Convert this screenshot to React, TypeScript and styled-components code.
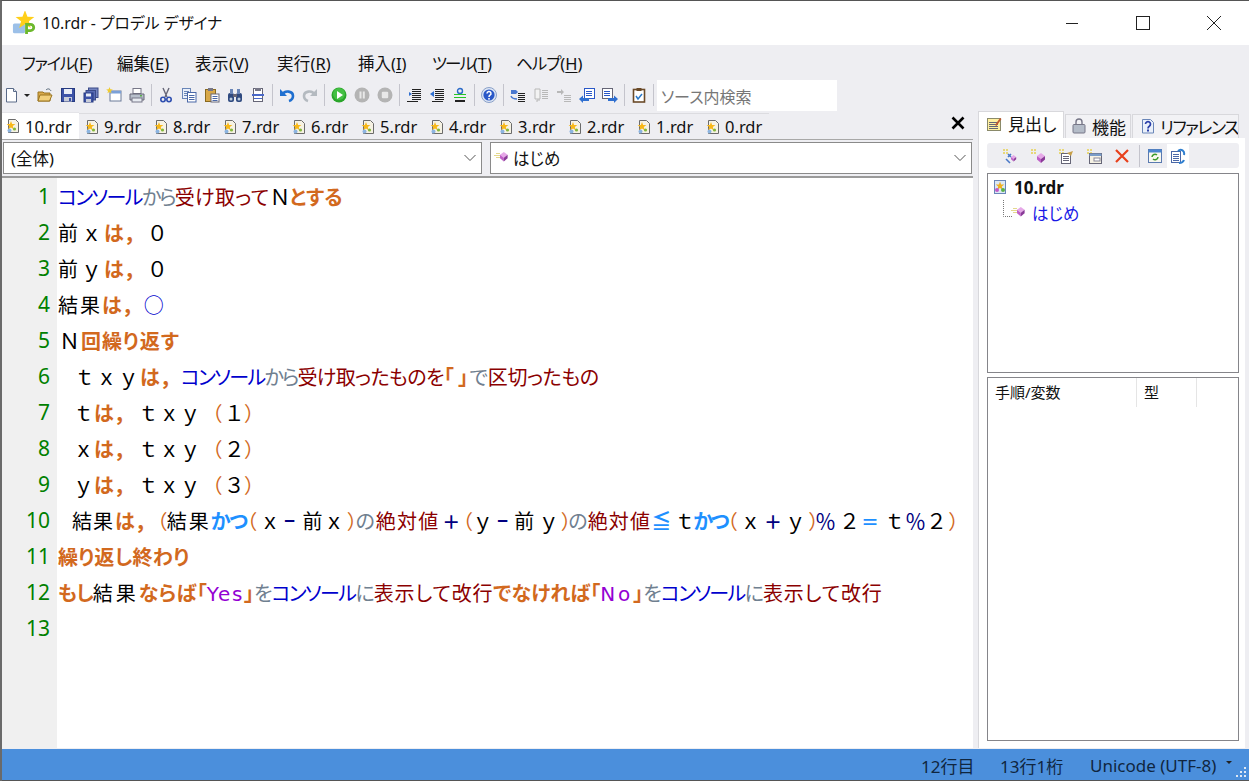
import React from "react";
import styled, { createGlobalStyle } from "styled-components";

const Global = createGlobalStyle`
  html, body { margin: 0; padding: 0; height: 100%; overflow: hidden; background: #eeeef2; }
  * { box-sizing: border-box; }
  body { font-family: "Noto Sans", "Noto Sans CJK JP", sans-serif; font-feature-settings: "palt"; color: #111; }
`;

const Windowed = styled.div`
  width: 1249px; height: 781px; display: flex; flex-direction: column;
  border-top: 1px solid #555; border-left: 2px solid #6a6a6a; background: #eeeef2; overflow: hidden;
`;
const TitleBar = styled.div`
  height: 44px; background: #fff; display: flex; align-items: center; padding-left: 10px; flex: none;
`;
const TitleText = styled.div`font-size: 15.8px; margin-left: 5px; margin-top: -2px; flex: 1;`;
const WinButton = styled.div`
  width: 71px; height: 44px; display: flex; align-items: center; justify-content: center;
`;
const WinGroup = styled.div`display: flex;`;
const MenuBar = styled.div`
  height: 33px; display: flex; align-items: center; padding: 3px 0 0 20px; font-size: 16.5px; flex: none;
  & u { text-underline-offset: 2px; }
`;
const MenuItem = styled.div`width: ${p => p.$w}px; flex: none;`;
const MenuLabel = styled.span`letter-spacing: ${p => p.$ls}px;`;
const Toolbar = styled.div`
  height: 32px; display: flex; align-items: center; padding: 2px 0 0 0; flex: none;
`;
const ToolBtn = styled.div`
  width: ${p => p.$w || 23}px; height: 24px; display: flex; align-items: center; justify-content: center; flex: none;
  background: ${p => p.$hot ? "#fff" : "transparent"};
`;
const ToolSep = styled.div`width: 1px; height: 22px; background: #c4c4cc; margin: 0 2px 0 3px; flex: none;`;
const Search = styled.div`
  width: 180px; height: 31px; background: #fff; color: #777; font-size: 16px; padding: 4px 0 0 4px; margin-left: 1px;
`;
const Main = styled.div`flex: 1; display: flex; min-height: 0;`;
const Left = styled.div`width: 971px; flex: none; display: flex; flex-direction: column;`;
const TabRow = styled.div`height: 29px; display: flex; align-items: flex-end; flex: none;`;
const Tab = styled.div`
  display: flex; align-items: center; height: ${p => p.$active ? 27 : 26}px; font-size: 16.5px;
  width: ${p => p.$active ? 77 : 69}px; flex: none; padding-left: ${p => p.$active ? 3 : 5}px; gap: 4px;
  background: ${p => p.$active ? "#fff" : "transparent"};
  border-top: 1px solid ${p => p.$active ? "#e4e4e8" : "#dcdce0"};
`;
const TabClose = styled.div`margin-left: auto; margin-right: 7px; width: 16px; height: 26px; display: flex; align-items: center; justify-content: center; align-self: flex-start;`;
const ComboRow = styled.div`display: flex; gap: 8px; height: 37px; padding: 2px 0 2px 1px; flex: none; border-top: 1px solid #a8a8a8;`;
const Combo = styled.div`
  width: ${p => p.$w}px; height: 32px; background: #fff; border: 1px solid #8a8a8a; display: flex; align-items: center;
  font-size: 16.5px; padding: 0 4px 1px ${p => p.$pad}px; gap: 3px; flex: none;
  & > span { flex: 1; }
`;
const Editor = styled.div`
  flex: 1; display: flex; background: #fff; border-top: 2px solid #9a9a9a; min-height: 0;
`;
const Gutter = styled.div`
  width: 55px; flex: none; background: #f0f0f0; padding: 1px 7px 0 0; text-align: right;
`;
const Num = styled.div`height: 35.98px; line-height: 35.98px; font-size: 21px; color: #008000; font-family: "Noto Sans", sans-serif;`;
const Code = styled.div`flex: 1; padding: 1px 0 0 1px;`;
const Line = styled.div`
  height: 35.98px; line-height: 35.98px; font-size: 20px; white-space: pre; padding-left: ${p => p.$indent || 0}px;
  font-family: "Noto Sans CJK JP", sans-serif;
`;
const colors = { k: "#0000cd", p: "#708090", v: "#8b0000", b: "#000", o: "#d2691e", s: "#9400d3", c: "#1e90ff", n: "#000080", m: "#000080", d: "#000080", e: "#1e90ff", r: "#d2691e" };
const spacing = { k: -1.55, p: -1, s: 1.5 };
const symbolSize = { m: 18, e: 18 };
const Tok = styled.span`
  color: ${p => colors[p.$k]};
  font-weight: ${p => ["o", "c", "m", "d", "e"].includes(p.$k) ? 700 : 400};
  letter-spacing: ${p => p.$ls ?? spacing[p.$k] ?? 0}px;
  margin-left: ${p => p.$ml || 0}px;
  ${p => symbolSize[p.$k] ? `font-size: ${symbolSize[p.$k]}px; font-feature-settings: normal;` : ""}
  ${p => p.$k === "s" ? `font-family: "DejaVu Sans", sans-serif; font-size: 20px;` : ""}
  ${p => p.$k === "d" ? `display: inline-block; width: 13px; font-feature-settings: normal; transform: scaleX(.66); transform-origin: 0 50%;` : ""}
`;
const Fw = styled.span`font-size: 21px; font-feature-settings: normal;`;
const Right = styled.div`flex: 1; display: flex; flex-direction: column; padding: 0 4px 0 5px; min-width: 0;`;
const PanelTabs = styled.div`height: 28px; display: flex; align-items: flex-end; flex: none;`;
const PanelTab = styled.div`
  width: ${p => p.$w}px; height: ${p => p.$active ? 27 : 24}px; flex: none; display: flex; align-items: center; gap: ${p => p.$gap}px;
  padding: 0 0 ${p => p.$active ? 3 : 1}px ${p => p.$pad}px; font-size: 17px; letter-spacing: ${p => p.$ls || 0}px; background: ${p => p.$active ? "#fff" : "#f2f2f5"};
  border: 1px solid #d8d8dc; border-bottom: none; margin-right: 1px; white-space: nowrap; overflow: hidden;
`;
const Panel = styled.div`
  flex: 1; background: #fff; padding: 5px 6px 7px 8px; display: flex; flex-direction: column; min-height: 0; border-left: 1px solid #d8d8dc;
`;
const PanelTools = styled.div`
  height: 25px; background: #eeeef2; border-radius: 3px; display: flex; align-items: center; padding-left: 9px; flex: none; margin-bottom: 5px;
`;
const Tree = styled.div`
  height: 200px; flex: none; border: 1px solid #85858a; padding: 0 0 0 4px; margin-bottom: 4px; font-size: 16.5px;
`;
const TreeRow = styled.div`display: flex; align-items: center; height: 26px; gap: ${p => p.$bold ? 6 : 4}px; padding-left: ${p => p.$in || 0}px;
  font-weight: ${p => p.$bold ? 700 : 400}; font-size: ${p => p.$bold ? 17 : 16.5}px; color: ${p => p.$blue ? "#1a1ae6" : "#111"};`;
const TreeGem = styled.span`margin: 0 1px 0 -5px; display: block;`;
const ListBox = styled.div`flex: 1; border: 1px solid #85858a; font-size: 15px;`;
const ListHead = styled.div`display: flex; height: 31px;`;
const ListCol = styled.div`width: ${p => p.$w}px; flex: none; padding: 3px 0 0 7px; height: 29px; border-right: 1px solid #e5e5e5;`;
const Status = styled.div`
  height: 33px; flex: none; background: #4b8fdc; color: #10263f; display: flex; align-items: center; justify-content: flex-end; font-size: 17px;
  border-bottom: 1px solid #555; border-top: 1px solid #eeeef2; margin-left: -2px;
`;
const StatusItem = styled.div`width: ${p => p.$w}px; flex: none; padding-top: 2px;`;
const StatusCaret = styled.svg`display: block; flex: none; margin: 0 4px 4px 8px;`;
const Grip = styled.svg`display: block; flex: none; align-self: flex-end; margin: 0 2px 2px 0;`;

/* ---- icons ---- */
const S = ({ children, w = 16, h = 16 }: any) => <svg width={w} height={h} viewBox="0 0 16 16" style={{ display: "block" }}>{children}</svg>;
const star = (x: number, y: number, r: number, f = "#ffd21f") => {
  const pts = [];
  for (let i = 0; i < 10; i++) {
    const a = -Math.PI / 2 + i * Math.PI / 5; const q = i % 2 ? r * 0.42 : r;
    pts.push(`${(x + q * Math.cos(a)).toFixed(1)},${(y + q * Math.sin(a)).toFixed(1)}`);
  }
  return <polygon points={pts.join(" ")} fill={f} />;
};
const gem = (x: number, y: number, s = 1) => <g transform={`translate(${x} ${y}) scale(${s})`}><polygon points="4,0 8,3 4,6 0,3" fill="#e6a8e8" /><polygon points="0,3 4,6 4,10 0,6.5" fill="#c060c8" /><polygon points="8,3 4,6 4,10 8,6.5" fill="#8a3a98" /></g>;
const sparks = (x: number, y: number) => <g fill="#e8d878"><rect x={x} y={y} width="2" height="2" /><rect x={x + 3} y={y} width="2" height="2" /><rect x={x} y={y + 3} width="2" height="2" /><rect x={x + 3} y={y + 3} width="2" height="2" /></g>;
const speed = (x: number, y: number) => <g fill="#e4d88c"><rect x={x + 2} y={y} width="4" height="1" /><rect x={x} y={y + 2} width="6" height="1" /><rect x={x + 2} y={y + 4} width="4" height="1" /></g>;
const lines = (x: number, y: number, n: number, w: number, c = "#222") => <g fill={c}>{Array.from({ length: n }, (_, i) => <rect key={i} x={x} y={y + i * 2} width={w} height="1" />)}</g>;

const Icons: Record<string, React.ReactNode> = {
  app: <S w={25} h={25}><rect x=".6" y="8" width="7.700" height="6.300" rx="1" fill="#9cc0e8" />{star(8.3, 5.8, 6.3, "#ffcf1a")}<path d="M9.300 14.700V8.500h2.600a2 2 0 0 1 0 4H9.300" fill="none" stroke="#6cb82c" strokeWidth="1.800" /></S>,
  tabdoc: <S><path d="M3.500 1.500h7l3 3v10h-10z" fill="#f6f2e4" stroke="#6b6b6b" />{star(6, 7.5, 4.6, "#f8b818")}<circle cx="4.500" cy="12.500" r="2" fill="#8cb4e0" /><circle cx="9.500" cy="11" r="1.600" fill="#84b83c" /></S>,
  newdoc: <S><path d="M3.500 1.500h7l3 3v10.500h-10z" fill="#fff" stroke="#5a6a88" /><path d="M10.500 1.500v3h3" fill="#dfe6f2" stroke="#5a6a88" /></S>,
  arrow: <svg width="6" height="3" viewBox="0 0 6 3"><path d="M0 0h6L3 3z" fill="#222" /></svg>,
  open: <S><path d="M1 5h5l1 1h6v8H1z" fill="#d9a94a" stroke="#9a7420" /><path d="M3 8h12l-2.500 6H1z" fill="#f2cf7a" stroke="#9a7420" /><path d="M9 3c2-2 4-1 5 1" stroke="#567" fill="none" /></S>,
  save: <S><rect x="1.500" y="1.500" width="13" height="13" fill="#3c52a8" stroke="#263a80" /><rect x="4" y="2" width="8" height="5" fill="#e8ecf6" /><rect x="4" y="10" width="8" height="4.500" fill="#c8ccd8" /><rect x="9" y="11" width="2" height="3" fill="#3c52a8" /></S>,
  saveall: <S><rect x="5.500" y="1" width="9.500" height="9.500" fill="#7484c0" stroke="#3a4a88" /><rect x="3" y="3.500" width="9.500" height="9.500" fill="#5a6cb4" stroke="#3a4a88" /><rect x="1" y="6" width="9" height="9" fill="#3c52a8" stroke="#263a80" /><rect x="3" y="6.500" width="5" height="3" fill="#e8ecf6" /><rect x="3" y="12" width="5" height="3" fill="#c8ccd8" /></S>,
  newwin: <S><rect x="4" y="4" width="11" height="10" fill="#fff" stroke="#6a7a98" /><rect x="4" y="4" width="11" height="2.500" fill="#7aa0d8" />{star(3.5, 3.5, 3.5, "#f0cc30")}</S>,
  print: <S><rect x="4" y="1.500" width="8" height="5" fill="#fff" stroke="#778" /><path d="M1 7h14v6H1z" fill="#b8c0cc" stroke="#667" /><rect x="3" y="11" width="10" height="4" fill="#e8ecf2" stroke="#778" /><rect x="11" y="8" width="2" height="1.500" fill="#5ab04a" /></S>,
  cut: <S><path d="M5 1l4 9M11 1L7 10" stroke="#667" strokeWidth="1.400" fill="none" /><circle cx="5" cy="12.500" r="2.200" fill="none" stroke="#2f4fb0" strokeWidth="1.600" /><circle cx="11" cy="12.500" r="2.200" fill="none" stroke="#2f4fb0" strokeWidth="1.600" /></S>,
  copy: <S><rect x="1.500" y="1.500" width="8" height="10" fill="#eaf0fa" stroke="#6a86b8" />{lines(3, 4, 3, 5, "#6a86b8")}<rect x="6.500" y="5.500" width="8.500" height="9.500" fill="#fff" stroke="#4a68a8" />{lines(8, 8, 3, 5.5, "#4a68a8")}</S>,
  paste: <S><rect x="1.500" y="2.500" width="10" height="12" fill="#d8a848" stroke="#8a6a20" /><rect x="4" y="1" width="5" height="3" fill="#778" /><rect x="7" y="7" width="8" height="8" fill="#fff" stroke="#667" />{lines(8.5, 9, 3, 5, "#4a68a8")}</S>,
  find: <S><rect x="1" y="6" width="6" height="9" rx="2" fill="#2f4a80" /><rect x="9" y="6" width="6" height="9" rx="2" fill="#2f4a80" /><rect x="6" y="7" width="4" height="3" fill="#667" /><rect x="3" y="2" width="3" height="5" fill="#6a86b8" /><rect x="10" y="2" width="3" height="5" fill="#6a86b8" /><circle cx="4" cy="12" r="1.500" fill="#bcd" /><circle cx="12" cy="12" r="1.500" fill="#bcd" /></S>,
  list: <S><rect x="3.500" y="1.500" width="9" height="13" fill="#fff" stroke="#667" /><rect x="5" y="1" width="6" height="3" fill="#778" /><rect x="2" y="7" width="12" height="2" fill="#4a68c8" /><rect x="4" y="11" width="8" height="1" fill="#4a68c8" /></S>,
  undo: <S><path d="M4 7c2-4 10-3 10 2 0 2-1 4-4 5" stroke="#1f6fd0" strokeWidth="2.600" fill="none" /><path d="M1 2l0 7 7 0z" fill="#1f6fd0" /></S>,
  redo: <S><path d="M12 7c-2-4-10-3-10 2 0 2 1 4 4 5" stroke="#b4bac0" strokeWidth="2.600" fill="none" /><path d="M15 2l0 7-7 0z" fill="#b4bac0" /></S>,
  play: <S><circle cx="8" cy="8" r="7.500" fill="#2aa52a" /><circle cx="8" cy="7" r="6" fill="#44c044" /><path d="M6 4l6 4-6 4z" fill="#fff" /></S>,
  pause: <S><circle cx="8" cy="8" r="7.500" fill="#b4b4b4" /><rect x="5.500" y="4.500" width="2" height="7" fill="#e8e8e8" /><rect x="8.800" y="4.500" width="2" height="7" fill="#e8e8e8" /></S>,
  stop: <S><circle cx="8" cy="8" r="7.500" fill="#b4b4b4" /><rect x="4.800" y="4.800" width="6.400" height="6.400" rx="1" fill="#e8e8e8" /></S>,
  indent: <S>{lines(6, 2, 6, 9)}<path d="M1 7l4-3v6z" fill="#2f6fd0" /><rect x="3" y="14" width="11" height="1" fill="#222" /></S>,
  outdent: <S>{lines(6, 2, 6, 9)}<path d="M0 7h3V5l3 2-3 2V7" fill="#2f6fd0" /><rect x="1" y="14" width="11" height="1" fill="#222" /></S>,
  comment: <S><circle cx="8" cy="4" r="2.500" fill="none" stroke="#2a6ac8" strokeWidth="1.400" /><rect x="2" y="7" width="12" height="1" fill="#26c426" /><rect x="2" y="10" width="12" height="1" fill="#26c426" /><rect x="3" y="13" width="10" height="2" fill="#222" /></S>,
  help: <S><circle cx="8" cy="8" r="7.500" fill="#dde6f4" stroke="#8aa0c8" /><circle cx="8" cy="8" r="5.600" fill="#2a58c8" /><path d="M6 6.500a2 2 0 1 1 3 1.700c-.8.500-1 .8-1 1.800" fill="none" stroke="#fff" strokeWidth="1.500" /><rect x="7.200" y="11" width="1.600" height="1.600" fill="#fff" /></S>,
  b1: <S><path d="M1 3h5l2 2-2 2H1" fill="#4a78d0" />{lines(8, 6, 5, 7)}<path d="M1 9c1 3 4 3 6 3" stroke="#4a78d0" strokeWidth="1.400" fill="none" /></S>,
  b2: <S><path d="M2 2h5v10H2z" fill="#f2f2f2" stroke="#b8b8b8" />{lines(9, 3, 5, 6, "#b8b8b8")}<path d="M4 15v-2h3" stroke="#b8b8b8" fill="none" /></S>,
  b3: <S><path d="M1 4h4V2l3 3-3 3V6H1z" fill="#b8b8b8" />{lines(8, 8, 4, 7, "#b8b8b8")}</S>,
  b4: <S><rect x="5.500" y="1.500" width="10" height="10" fill="#fff" stroke="#2a58c8" />{lines(7, 4, 3, 6, "#2a58c8")}<path d="M0 12l4-3.500V11h6v3H4v2z" fill="#2f6fd0" /></S>,
  b5: <S><rect x=".500" y="1.500" width="10" height="10" fill="#fff" stroke="#667" />{lines(2, 4, 3, 6, "#2a58c8")}<path d="M16 12l-4-3.500V11H6v3h6v2z" fill="#2f6fd0" /></S>,
  clip: <S><rect x="2.500" y="2.500" width="11" height="12.500" fill="#fff" stroke="#6b4a28" strokeWidth="1.600" /><rect x="5.500" y="1" width="5" height="3" fill="#6b4a28" /><path d="M5 9l2 3 4-5" stroke="#2a78c8" strokeWidth="1.500" fill="none" /></S>,
  gemsmall: <S>{speed(0, 3)}{gem(6, 2, .95)}</S>,
  tvars: <S>{sparks(1, 1)}<path d="M6 6l3 3M9 6l-3 3" stroke="#4a78c8" strokeWidth="1.600" />{gem(9, 7, .65)}<path d="M4 11l4 4" stroke="#4a78c8" strokeWidth="1.600" /></S>,
  tgem: <S>{sparks(1, 1)}{gem(7, 5, 1)}</S>,
  tprop: <S>{sparks(1, 1)}<rect x="3.500" y="5.500" width="9" height="10" fill="#fff" stroke="#667" />{lines(5, 8, 3, 6, "#667")}<path d="M9 5l6-2-2 5z" fill="#c8a048" /></S>,
  tclass: <S>{sparks(1, 1)}<rect x="3.500" y="5.500" width="12" height="10" fill="#f6f2e4" stroke="#667" /><rect x="3.500" y="5.500" width="12" height="2.500" fill="#7a9cc8" /><rect x="8" y="10" width="6" height="3" fill="#fff" stroke="#889" /></S>,
  del: <S><path d="M2 2l12 12M14 2L2 14" stroke="#e8401c" strokeWidth="2.200" /></S>,
  refresh: <S><rect x="1.500" y="1.500" width="13" height="13" fill="#f8f8f0" stroke="#5a7ab0" /><rect x="1.500" y="1.500" width="13" height="3" fill="#4a86d0" /><path d="M5 9a3 3 0 0 1 5-2M11 9a3 3 0 0 1-5 2" stroke="#3a9a2a" strokeWidth="1.500" fill="none" /></S>,
  sync: <S><rect x="1.500" y="3.500" width="9" height="11" fill="#fff" stroke="#4a68a8" />{lines(3, 6, 4, 6, "#4a68a8")}<path d="M8 3c3-3 7 0 6 4M14 12c-1 3-3 3-5 3" stroke="#2f7fd0" strokeWidth="2" fill="none" /></S>,
  note: <S><rect x="1.500" y="2.500" width="13" height="12" fill="#fff0a0" stroke="#8a8a6a" />{lines(3, 6, 4, 9, "#667")}<path d="M9 9l5-7 1.500 1-5 7z" fill="#c05a30" /></S>,
  lock: <S><path d="M5 7V4a3 3 0 0 1 6 0v3" fill="none" stroke="#778" strokeWidth="1.400" /><rect x="2" y="6.500" width="12" height="8.500" rx="1" fill="#b4bcc8" stroke="#778" /></S>,
  qdoc: <S><path d="M2.500 1.500h8l3 3v10.500h-11z" fill="#eaf0fa" stroke="#6a86b8" /><path d="M5.500 6a2.500 2.500 0 1 1 3.800 2.200c-1 .6-1.300 1-1.300 2.300" fill="none" stroke="#2a3fa8" strokeWidth="1.700" /><rect x="7" y="11.500" width="2" height="2" fill="#2a3fa8" /></S>,
  root: <S><rect x="2.500" y="1.500" width="11" height="13" fill="#dce8f6" stroke="#6a86b8" />{star(8, 7, 4.5, "#f0b020")}<circle cx="5" cy="11" r="2" fill="#c05ac8" /><circle cx="11" cy="11" r="2" fill="#5ab04a" /></S>,
};

const Ico = ({ n }: { n: string }) => <>{Icons[n]}</>;
const Btn = ({ n, w, hot }: any) => <ToolBtn $w={w} $hot={hot}><Ico n={n} /></ToolBtn>;
const Connector = styled.svg`display: block; flex: none;`;

type T = [string, string, number?, number?];
const LINES: { i?: number; t: T[] }[] = [
  { t: [["コンソール", "k"], ["から", "p", -2], ["受け取って", "v", .4], ["Ｎ", "b", -1], ["とする", "o", .3]] },
  { t: [["前", "b"], ["ｘ", "b", 0, 3], ["は，", "o", 0, 2], ["０", "b", 0, 2]] },
  { t: [["前", "b"], ["ｙ", "b", 0, 3], ["は，", "o", 0, 2], ["０", "b", 0, 2]] },
  { t: [["結果", "b", 2], ["は，", "o"], ["○", "k", 0, 1]] },
  { t: [["Ｎ", "b", 0, 1], ["回繰り返す", "o", 1, 1]] },
  { i: 15, t: [["ｔｘｙ", "b", 1, 1], ["は，", "o"], ["コンソール", "k"], ["から", "p", -2], ["受け取ったものを", "v", -.6], ["「 」", "o"], ["で", "p", 0, 1], ["区切ったもの", "v", -.4]] },
  { i: 15, t: [["ｔ", "b"], ["は，", "o"], ["ｔｘｙ", "b", 0, 3], ["（", "r", 0, 11], ["１", "b", 0, 2], ["）", "r"]] },
  { i: 15, t: [["ｘ", "b"], ["は，", "o"], ["ｔｘｙ", "b", 0, 3], ["（", "r", 0, 11], ["２", "b", 0, 2], ["）", "r"]] },
  { i: 15, t: [["ｙ", "b"], ["は，", "o"], ["ｔｘｙ", "b", 0, 3], ["（", "r", 0, 11], ["３", "b", 0, 2], ["）", "r"]] },
  { i: 14, t: [["結果", "b", 1], ["は，", "o", 0, 1], ["（", "r", 0, 1], ["結果", "b", 2], ["かつ", "c", -1.500], ["（", "r"], ["ｘ", "b", 0, 3], ["－", "d", 0, 3], ["前", "b", 0, 6], ["ｘ", "b", 0, 1], ["）", "r", -2, 3], ["の", "p", 0], ["絶対値", "v", 1.2, 1], ["＋", "m", 0, 3], ["（", "r", 0, 2], ["ｙ", "b"], ["－", "d", 0, 3], ["前", "b", 0, 5], ["ｙ", "b", 0, 4], ["）", "r", -3, 2], ["の", "p", 0], ["絶対値", "v", 1.2], ["≦", "c"], ["ｔ", "b", -2, 3], ["かつ", "c", -2.500], ["（", "r"], ["ｘ", "b", 0, 3], ["＋", "m", 0, 3], ["ｙ", "b", 0, 3], ["）", "r", -4, 3], ["％", "n"], ["２", "b", 0, 3], ["＝", "e", 0, 1], ["ｔ", "b", 0, 5], ["％", "n"], ["２", "b"], ["）", "r", 0, 2]] },
  { t: [["繰り返し終わり", "o", .3]] },
  { t: [["もし", "o", -1], ["結果", "b", 3], ["ならば", "o", .3], ["「", "o"], ["Yes", "s", 1.700], ["」", "o"], ["を", "p"], ["コンソール", "k"], ["に", "p"], ["表示して改行", "v", .8], ["でなければ", "o"], ["「", "o"], ["No", "s", 3], ["」", "o"], ["を", "p"], ["コンソール", "k"], ["に", "p"], ["表示して改行", "v", .8]] },
  { t: [] },
];

const MENUS: [string, string, number, number][] = [["ファイル", "F", 95, -1.3], ["編集", "E", 78, 0], ["表示", "V", 82, .5], ["実行", "R", 81, .3], ["挿入", "I", 74, 0], ["ツール", "T", 84, -2], ["ヘルプ", "H", 70, -1]];
const TABS = ["10", "9", "8", "7", "6", "5", "4", "3", "2", "1", "0"];

const renderToken = (s: string) => s.split(/([Ａ-Ｚａ-ｚ０-９，％]+)/).map((part, i) =>
  i % 2 ? <Fw key={i}>{part}</Fw> : part);

const Chevron = () => <svg width="14" height="8"><path d="M1.500 1l5.500 5.500L12.500 1" fill="none" stroke="#555" /></svg>;

export default function App() {
  return (
    <Windowed>
      <Global />
      <TitleBar>
        <Ico n="app" />
        <TitleText>10.rdr - プロデル デザイナ</TitleText>
        <WinGroup>
          <WinButton><svg width="14" height="14"><path d="M1 7.500h12" stroke="#222" /></svg></WinButton>
          <WinButton><svg width="16" height="16"><rect x="1.500" y="1.500" width="13" height="13" fill="none" stroke="#222" /></svg></WinButton>
          <WinButton><svg width="16" height="16"><path d="M1 1l14 14M15 1L1 15" stroke="#222" /></svg></WinButton>
        </WinGroup>
      </TitleBar>
      <MenuBar>
        {MENUS.map(([a, b, w, ls]) => <MenuItem key={b} $w={w}><MenuLabel $ls={ls}>{a}</MenuLabel>(<u>{b}</u>)</MenuItem>)}
      </MenuBar>
      <Toolbar>
        <Btn n="newdoc" w={18} /><Btn n="arrow" w={13} />
        <Btn n="open" /><Btn n="save" /><Btn n="saveall" /><Btn n="newwin" /><Btn n="print" />
        <ToolSep />
        <Btn n="cut" /><Btn n="copy" /><Btn n="paste" /><Btn n="find" /><Btn n="list" />
        <ToolSep />
        <Btn n="undo" /><Btn n="redo" />
        <ToolSep />
        <Btn n="play" /><Btn n="pause" /><Btn n="stop" />
        <ToolSep />
        <Btn n="outdent" /><Btn n="indent" /><Btn n="comment" />
        <ToolSep />
        <Btn n="help" />
        <ToolSep />
        <Btn n="b1" /><Btn n="b2" /><Btn n="b3" /><Btn n="b4" /><Btn n="b5" />
        <ToolSep />
        <Btn n="clip" />
        <ToolSep />
        <Search>ソース内検索</Search>
      </Toolbar>
      <Main>
        <Left>
          <TabRow>
            {TABS.map((t, i) => (
              <Tab key={t} $active={i === 0}><Ico n="tabdoc" />{t}.rdr</Tab>
            ))}
            <TabClose><svg width="14" height="14"><path d="M1.500 1.500l11 11M12.500 1.500l-11 11" stroke="#000" strokeWidth="2.600" /></svg></TabClose>
          </TabRow>
          <ComboRow>
            <Combo $w={479} $pad={7}><span>(全体)</span><Chevron /></Combo>
            <Combo $w={482} $pad={3}><Ico n="gemsmall" /><span>はじめ</span><Chevron /></Combo>
          </ComboRow>
          <Editor>
            <Gutter>
              {LINES.map((_, i) => <Num key={i}>{i + 1}</Num>)}
            </Gutter>
            <Code>
              {LINES.map((l, i) => (
                <Line key={i} $indent={l.i}>
                  {l.t.map(([s, k, ls, ml], j) => <Tok key={j} $k={k} $ls={ls} $ml={ml}>{renderToken(s)}</Tok>)}
                </Line>
              ))}
            </Code>
          </Editor>
        </Left>
        <Right>
          <PanelTabs>
            <PanelTab $w={86} $gap={6} $pad={7} $active><Ico n="note" />見出し</PanelTab>
            <PanelTab $w={66} $gap={5} $pad={5}><Ico n="lock" />機能</PanelTab>
            <PanelTab $w={107} $gap={4} $pad={7} $ls={-1.5}><Ico n="qdoc" />リファレンス</PanelTab>
          </PanelTabs>
          <Panel>
            <PanelTools>
              <Btn n="tvars" w={28} /><Btn n="tgem" w={28} /><Btn n="tprop" w={28} /><Btn n="tclass" w={28} /><Btn n="del" w={28} />
              <ToolSep />
              <Btn n="refresh" w={25} /><Btn n="sync" w={22} hot />
            </PanelTools>
            <Tree>
              <TreeRow $bold><Ico n="root" />10.rdr</TreeRow>
              <TreeRow $blue $in={8}>
                <Connector width="12" height="26"><path d="M3.500 0v16.500h9" fill="none" stroke="#777" strokeDasharray="1 1" /></Connector>
                <TreeGem><Ico n="gemsmall" /></TreeGem>はじめ
              </TreeRow>
            </Tree>
            <ListBox>
              <ListHead>
                <ListCol $w={149}>手順/変数</ListCol>
                <ListCol $w={60}>型</ListCol>
              </ListHead>
            </ListBox>
          </Panel>
        </Right>
      </Main>
      <Status>
        <StatusItem $w={79}>12行目</StatusItem>
        <StatusItem $w={90}>13行1桁</StatusItem>
        <StatusItem $w={128}>Unicode (UTF-8)</StatusItem>
        <StatusCaret width="6" height="3" viewBox="0 0 6 3"><path d="M0 0h6L3 3z" fill="#222" /></StatusCaret>
        <Grip width="11" height="11" viewBox="0 0 11 11"><g fill="#dfe8f4"><rect x="8" y="0" width="2" height="2" /><rect x="4" y="4" width="2" height="2" /><rect x="8" y="4" width="2" height="2" /><rect x="0" y="8" width="2" height="2" /><rect x="4" y="8" width="2" height="2" /><rect x="8" y="8" width="2" height="2" /></g></Grip>
      </Status>
    </Windowed>
  );
}
